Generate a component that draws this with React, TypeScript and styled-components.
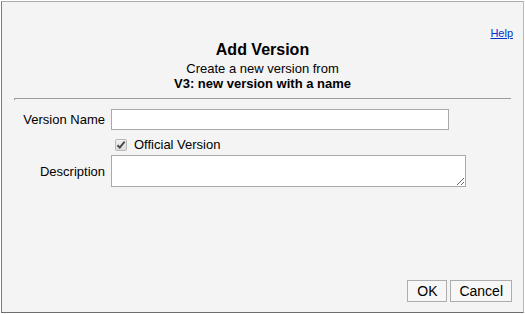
import React, { useState } from 'react';
import styled, { createGlobalStyle } from 'styled-components';

const GlobalStyle = createGlobalStyle`
  html, body {
    margin: 0;
    padding: 0;
    background: #ffffff;
  }
  body {
    font-family: 'Liberation Sans', Arial, sans-serif;
    color: #000;
  }
`;

const Dialog = styled.div`
  box-sizing: border-box;
  margin: 1px 0 0 1px;
  width: 523px;
  height: 312px;
  display: flex;
  flex-direction: column;
  background: #f4f4f4;
  border-top: 1px solid #acacac;
  border-left: 1px solid #7a7a7a;
  border-bottom: 1px solid #6d6d6d;
  border-right: 1px solid #b9b9b9;
`;

const HelpRow = styled.div`
  display: flex;
  justify-content: flex-end;
  padding: 25px 10px 0 0;
`;

const HelpLink = styled.a`
  font-size: 11px;
  color: #0033cc;
  text-decoration: underline;
  cursor: pointer;
`;

const Header = styled.div`
  display: flex;
  flex-direction: column;
  align-items: center;
  margin-top: 2px;
`;

const Title = styled.div`
  font-size: 16px;
  font-weight: bold;
  margin-bottom: 2px;
`;

const SubTitle = styled.div<{ bold?: boolean }>`
  font-size: 13px;
  font-weight: ${(props) => (props.bold ? 'bold' : 'normal')};
`;

const Divider = styled.hr`
  margin: 7px 12px 0 12px;
  border: none;
  border-top: 1px solid #9c9c9c;
  border-left: 1px solid #9c9c9c;
  height: 1px;
`;

const Form = styled.div`
  display: grid;
  grid-template-columns: 103px auto;
  column-gap: 6px;
  row-gap: 3px;
  align-items: center;
  margin-top: 9px;
  justify-content: start;
`;

const Label = styled.label`
  font-size: 13px;
  text-align: right;
`;

const TextInput = styled.input`
  box-sizing: border-box;
  width: 338px;
  height: 21px;
  margin: 0;
  border: 1px solid #a9a9a9;
  background: #fff;
  font-family: inherit;
  font-size: 13px;
  outline: none;
`;

const TextArea = styled.textarea`
  box-sizing: border-box;
  width: 355px;
  height: 32px;
  margin: 0;
  border: 1px solid #a9a9a9;
  background: #fff;
  font-family: inherit;
  font-size: 13px;
  outline: none;
`;

const CheckRow = styled.div`
  display: flex;
  align-items: center;
  gap: 7px;
  padding: 4px 0 0 4px;
  font-size: 13px;
`;

const CheckBox = styled.span<{ checked: boolean }>`
  box-sizing: border-box;
  width: 12px;
  height: 12px;
  border: 1px solid #b8b8b8;
  border-radius: 2px;
  background: linear-gradient(#f2f2f2, #dcdcdc);
  display: flex;
  align-items: center;
  justify-content: center;
  cursor: pointer;
  svg {
    visibility: ${(props) => (props.checked ? 'visible' : 'hidden')};
  }
`;

const Footer = styled.div`
  margin-top: auto;
  display: flex;
  justify-content: flex-end;
  gap: 3px;
  padding: 0 11px 10px 0;
`;

const Button = styled.button`
  box-sizing: border-box;
  height: 22px;
  min-width: 40px;
  padding: 0 8px;
  font-family: 'Liberation Sans', Arial, sans-serif;
  font-size: 14px;
  color: #000;
  background: #f7f7f7;
  border: 1px solid #adadad;
  border-radius: 0;
  cursor: pointer;
`;

export default function App() {
  const [official, setOfficial] = useState(true);

  return (
    <>
      <GlobalStyle />
      <Dialog>
        <HelpRow>
          <HelpLink>Help</HelpLink>
        </HelpRow>
        <Header>
          <Title>Add Version</Title>
          <SubTitle>Create a new version from</SubTitle>
          <SubTitle bold>V3: new version with a name</SubTitle>
        </Header>
        <Divider />
        <Form>
          <Label>Version Name</Label>
          <TextInput type="text" />
          <span />
          <CheckRow>
            <CheckBox checked={official} onClick={() => setOfficial(!official)}>
              <svg width="10" height="10" viewBox="0 0 10 10">
                <path d="M1.5 5.2 L3.8 7.6 L8.6 1.6" fill="none" stroke="#4a4a4a" strokeWidth="2" />
              </svg>
            </CheckBox>
            Official Version
          </CheckRow>
          <Label>Description</Label>
          <TextArea />
        </Form>
        <Footer>
          <Button>OK</Button>
          <Button>Cancel</Button>
        </Footer>
      </Dialog>
    </>
  );
}
